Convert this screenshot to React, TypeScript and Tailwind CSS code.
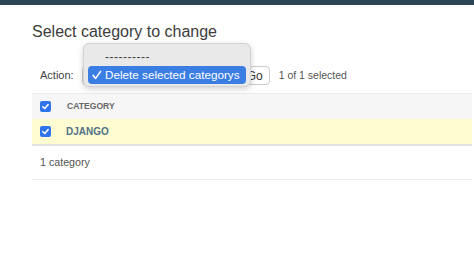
import React from "react";

function Check() {
  return (
    <div className="w-[11px] h-[11px] rounded-[2px] bg-[#2f74ec] flex items-center justify-center">
      <svg width="9" height="9" viewBox="0 0 10 10">
        <path d="M2 5.2 L4.2 7.3 L8 2.8" fill="none" stroke="white" strokeWidth="1.7" strokeLinecap="round" strokeLinejoin="round" />
      </svg>
    </div>
  );
}

export default function App() {
  return (
    <div className="w-[474px] h-[280px] bg-white overflow-hidden" style={{ fontFamily: '"Liberation Sans", Arial, sans-serif' }}>
      <div className="h-[5px] bg-[#2b4456]" />
      <div className="pl-[32px] pr-[2px]">
        <h1 className="mt-[16.5px] text-[16px] leading-[20px] text-[#3c3c3c] font-normal">Select category to change</h1>
        <div className="relative mt-[24.5px] h-[19px] flex items-center pl-[8px]">
          <span className="text-[11px] text-[#444]">Action:</span>
          <div className="ml-[8px] w-[160px] h-[19px] bg-white border border-[#ccc] rounded-[4px]" />
          <div className="ml-[4px] w-[24px] h-[19px] bg-white border border-[#ccc] rounded-[4px] flex items-center justify-end pr-[6px] text-[12px] text-[#333]">Go</div>
          <span className="ml-[9px] text-[10.5px] text-[#555]">1 of 1 selected</span>
          <div className="absolute left-[51px] top-[-23.5px] w-[168px] h-[44.5px] rounded-[6px] bg-[#e9e9e9] border border-[#d2d2d2] shadow-[0_2px_6px_rgba(0,0,0,0.18)] px-[4px] pt-[5px]">
            <div className="h-[17px] flex items-center pl-[17px] text-[12px] tracking-[0.5px] text-[#444] leading-none">----------</div>
            <div className="h-[18px] rounded-[4px] bg-[#3a7ee4] flex items-center pl-[4px] text-[11.7px] text-white leading-none">
              <svg width="13" height="10" viewBox="0 0 13 10" className="shrink-0">
                <path d="M1.2 5.4 L3.6 8.4 L8.6 1.4" fill="none" stroke="white" strokeWidth="1.6" strokeLinecap="round" strokeLinejoin="round" />
              </svg>
              <span>Delete selected categorys</span>
            </div>
          </div>
        </div>
        <div className="mt-[8px] h-[25.5px] bg-[#f6f6f6] border-t border-[#ececec] flex items-center pl-[8px]">
          <Check />
          <span className="ml-[16px] text-[8.6px] font-semibold text-[#666]">CATEGORY</span>
        </div>
        <div className="h-[27px] bg-[#fffcd2] border-b-[2px] border-[#e2e2e2] flex items-center pl-[8px]">
          <Check />
          <span className="ml-[15px] text-[10px] font-bold text-[#4f7187]">DJANGO</span>
        </div>
        <div className="h-[34px] border-b border-[#eeeeee] flex items-center pl-[8px] text-[10.7px] text-[#555]">1 category</div>
      </div>
    </div>
  );
}
